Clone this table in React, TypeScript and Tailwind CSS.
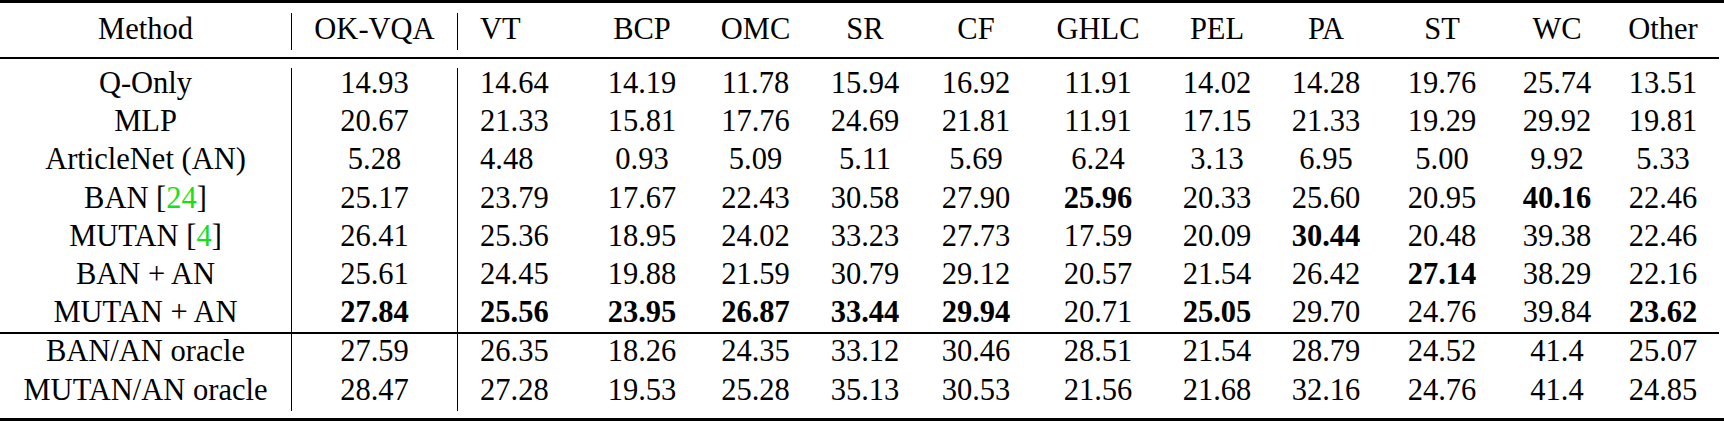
import clsx from "clsx";

const columns = ["VT", "BCP", "OMC", "SR", "CF", "GHLC", "PEL", "PA", "ST", "WC", "Other"];

type Row = {
  method: React.ReactNode;
  okvqa: string;
  values: string[];
  bold?: number[]; // -1 = OK-VQA, 0.. = index into values
};

const rows: Row[] = [
  {
    method: "Q-Only",
    okvqa: "14.93",
    values: ["14.64", "14.19", "11.78", "15.94", "16.92", "11.91", "14.02", "14.28", "19.76", "25.74", "13.51"],
  },
  {
    method: "MLP",
    okvqa: "20.67",
    values: ["21.33", "15.81", "17.76", "24.69", "21.81", "11.91", "17.15", "21.33", "19.29", "29.92", "19.81"],
  },
  {
    method: "ArticleNet (AN)",
    okvqa: "5.28",
    values: ["4.48", "0.93", "5.09", "5.11", "5.69", "6.24", "3.13", "6.95", "5.00", "9.92", "5.33"],
  },
  {
    method: (
      <>
        BAN [<span className="text-[#16e016]">24</span>]
      </>
    ),
    okvqa: "25.17",
    values: ["23.79", "17.67", "22.43", "30.58", "27.90", "25.96", "20.33", "25.60", "20.95", "40.16", "22.46"],
    bold: [5, 9],
  },
  {
    method: (
      <>
        MUTAN [<span className="text-[#16e016]">4</span>]
      </>
    ),
    okvqa: "26.41",
    values: ["25.36", "18.95", "24.02", "33.23", "27.73", "17.59", "20.09", "30.44", "20.48", "39.38", "22.46"],
    bold: [7],
  },
  {
    method: "BAN + AN",
    okvqa: "25.61",
    values: ["24.45", "19.88", "21.59", "30.79", "29.12", "20.57", "21.54", "26.42", "27.14", "38.29", "22.16"],
    bold: [8],
  },
  {
    method: "MUTAN + AN",
    okvqa: "27.84",
    values: ["25.56", "23.95", "26.87", "33.44", "29.94", "20.71", "25.05", "29.70", "24.76", "39.84", "23.62"],
    bold: [-1, 0, 1, 2, 3, 4, 6, 10],
  },
  {
    method: "BAN/AN oracle",
    okvqa: "27.59",
    values: ["26.35", "18.26", "24.35", "33.12", "30.46", "28.51", "21.54", "28.79", "24.52", "41.4", "25.07"],
  },
  {
    method: "MUTAN/AN oracle",
    okvqa: "28.47",
    values: ["27.28", "19.53", "25.28", "35.13", "30.53", "21.56", "21.68", "32.16", "24.76", "41.4", "24.85"],
  },
];

const grid =
  "grid grid-cols-[291px_1px_165px_1px_127px_114px_113px_106px_116px_128px_110px_108px_124px_106px_106px]";

function Row({ row }: { row: Row }) {
  const isBold = (i: number) => row.bold?.includes(i);
  return (
    <>
      <div className="font-['Liberation_Serif'] text-center">{row.method}</div>
      <div className={clsx("font-['Liberation_Serif'] text-center", isBold(-1) && "font-bold")}>
        {row.okvqa}
      </div>
      {row.values.map((v, i) => (
        <div
          key={i}
          className={clsx(
            "font-['Liberation_Serif']",
            i === 0 ? "pl-[22px] text-left" : "text-center",
            isBold(i) && "font-bold"
          )}
        >
          {v}
        </div>
      ))}
    </>
  );
}

export default function App() {
  return (
    <div className="w-[1724px] h-[422px] bg-white text-black font-['Liberation_Serif'] text-[30.5px] leading-[38.25px] whitespace-nowrap">
      <div className="h-[3px] bg-black" />

      {/* header */}
      <div className={clsx(grid, "h-[54px]")}>
        <div className="font-['Liberation_Serif'] pt-[6.9px] text-center">Method</div>
        <div className="mt-[10px] h-[37px] bg-black" />
        <div className="font-['Liberation_Serif'] pt-[6.9px] text-center">OK-VQA</div>
        <div className="mt-[10px] h-[37px] bg-black" />
        {columns.map((c, i) => (
          <div
            key={c}
            className={clsx("font-['Liberation_Serif'] pt-[6.9px]", i === 0 ? "pl-[22px] text-left" : "text-center")}
          >
            {c}
          </div>
        ))}
      </div>
      <div className="h-[2px] mr-[5px] bg-black" />

      {/* body */}
      <div className="pt-[4.9px] pb-[9px]">
        <div className={clsx(grid, "grid-rows-[repeat(7,38.25px)_0.65px_repeat(2,38.25px)]")}>
          <div className="col-start-2 row-span-full mt-[4.1px] -mb-[2.05px] bg-black" />
          <div className="col-start-4 row-span-full mt-[4.1px] -mb-[2.05px] bg-black" />
          <div className="col-span-full row-start-8 h-[2px] mt-[0.4px] -mr-[3px] bg-black" />
          {rows.map((r, i) => (
            <Row key={i} row={r} />
          ))}
        </div>
      </div>
      <div className="h-[3px] bg-black" />
    </div>
  );
}
